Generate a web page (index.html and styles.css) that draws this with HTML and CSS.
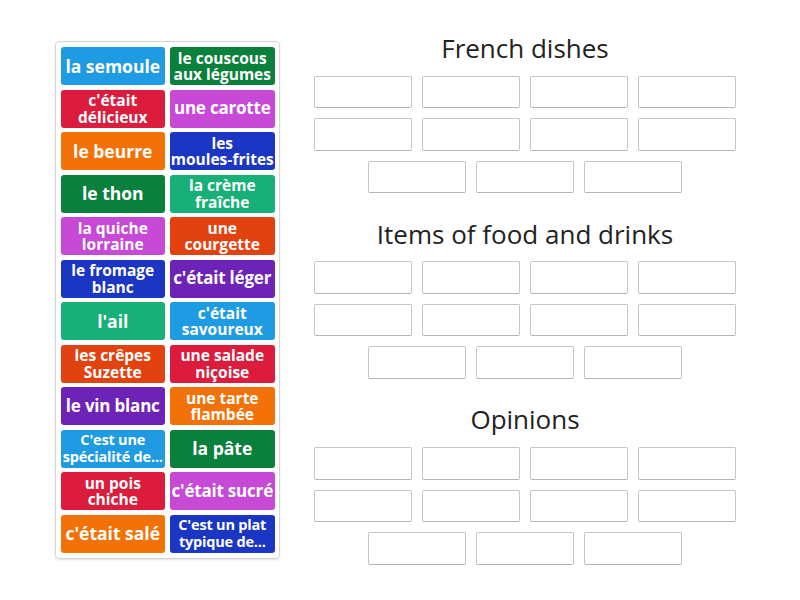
FILE: index.html
```html
<!DOCTYPE html>
<html lang="fr">
<head>
  <meta charset="UTF-8" />
  <meta name="viewport" content="width=device-width, initial-scale=1.0" />
  <title>French food - group sort</title>
  <link rel="stylesheet" href="styles.css">
</head>
<body>
  <div class="page">
    <div class="tray">
      <div class="tile lblue one">la semoule</div>
      <div class="tile green">le couscous aux légumes</div>
      <div class="tile red">c'était délicieux</div>
      <div class="tile magenta one fit">une carotte</div>
      <div class="tile orange one">le beurre</div>
      <div class="tile navy">les moules&#8209;frites</div>
      <div class="tile green one">le thon</div>
      <div class="tile teal">la crème fraîche</div>
      <div class="tile magenta">la quiche lorraine</div>
      <div class="tile rust">une courgette</div>
      <div class="tile navy">le fromage blanc</div>
      <div class="tile purple one fit">c'était léger</div>
      <div class="tile teal one">l'ail</div>
      <div class="tile lblue">c'était savoureux</div>
      <div class="tile rust">les crêpes Suzette</div>
      <div class="tile red">une salade niçoise</div>
      <div class="tile purple one fit">le vin blanc</div>
      <div class="tile orange">une tarte flambée</div>
      <div class="tile lblue small">C'est une spécialité de...</div>
      <div class="tile green one">la pâte</div>
      <div class="tile red">un pois chiche</div>
      <div class="tile magenta one fit">c'était sucré</div>
      <div class="tile orange one">c'était salé</div>
      <div class="tile navy small">C'est un plat typique de...</div>
    </div>

    <div class="groups">
      <div class="group">
        <h2>French dishes</h2>
        <div class="slots">
          <div class="slot"></div><div class="slot"></div><div class="slot"></div><div class="slot"></div>
          <div class="slot"></div><div class="slot"></div><div class="slot"></div><div class="slot"></div>
          <div class="slot"></div><div class="slot"></div><div class="slot"></div>
        </div>
      </div>
      <div class="group">
        <h2>Items of food and drinks</h2>
        <div class="slots">
          <div class="slot"></div><div class="slot"></div><div class="slot"></div><div class="slot"></div>
          <div class="slot"></div><div class="slot"></div><div class="slot"></div><div class="slot"></div>
          <div class="slot"></div><div class="slot"></div><div class="slot"></div>
        </div>
      </div>
      <div class="group">
        <h2>Opinions</h2>
        <div class="slots">
          <div class="slot"></div><div class="slot"></div><div class="slot"></div><div class="slot"></div>
          <div class="slot"></div><div class="slot"></div><div class="slot"></div><div class="slot"></div>
          <div class="slot"></div><div class="slot"></div><div class="slot"></div>
        </div>
      </div>
    </div>
  </div>
</body>
</html>
```

FILE: styles.css
```css
body, html {
  margin: 0;
  padding: 0;
  background-color: #fff;
  font-family: "Open Sans", Arial, sans-serif;
  color: #222;
}
.page {
  display: flex;
  align-items: flex-start;
  padding: 41px 0 0 55px;
}
.tray {
  display: grid;
  grid-template-columns: repeat(2, 104.5px);
  grid-auto-rows: 38px;
  column-gap: 5px;
  row-gap: 4.5px;
  padding: 5px 4.5px;
  border: 1px solid #d6d6d6;
  border-radius: 4px;
  box-shadow: 0 1px 2px rgba(0, 0, 0, 0.12);
}
.tile {
  display: flex;
  align-items: center;
  justify-content: center;
  text-align: center;
  border-radius: 3px;
  color: #fff;
  font-weight: bold;
  font-size: 15.5px;
  line-height: 16.5px;
  padding: 0 2px;
}
.tile.one {
  font-size: 17.5px;
  white-space: nowrap;
  padding: 0;
}
.tile.fit {
  font-size: 17px;
  letter-spacing: -0.2px;
}
.tile.small {
  font-size: 14.5px;
  padding: 0;
  letter-spacing: -0.2px;
}
.lblue { background-color: #1e9be2; }
.green { background-color: #0b7f3c; }
.red { background-color: #db1c3d; }
.magenta { background-color: #c64ad6; }
.orange { background-color: #f27207; }
.navy { background-color: #1b36c3; }
.teal { background-color: #16b078; }
.rust { background-color: #e2420f; }
.purple { background-color: #6d22b8; }

.groups {
  margin-left: 34px;
  width: 422px;
  margin-top: -10px;
}
.group {
  margin-bottom: 23.5px;
}
.group h2 {
  margin: 0 0 10.7px;
  font-size: 26px;
  font-weight: normal;
  line-height: 34px;
  text-align: center;
}
.slots {
  display: flex;
  flex-wrap: wrap;
  justify-content: center;
  gap: 10px;
}
.slot {
  box-sizing: border-box;
  width: 98px;
  height: 32.5px;
  border: 1px solid #c6c6c6;
  border-bottom-color: #b4b4b4;
  border-radius: 2px;
  background-color: #fff;
}
```
